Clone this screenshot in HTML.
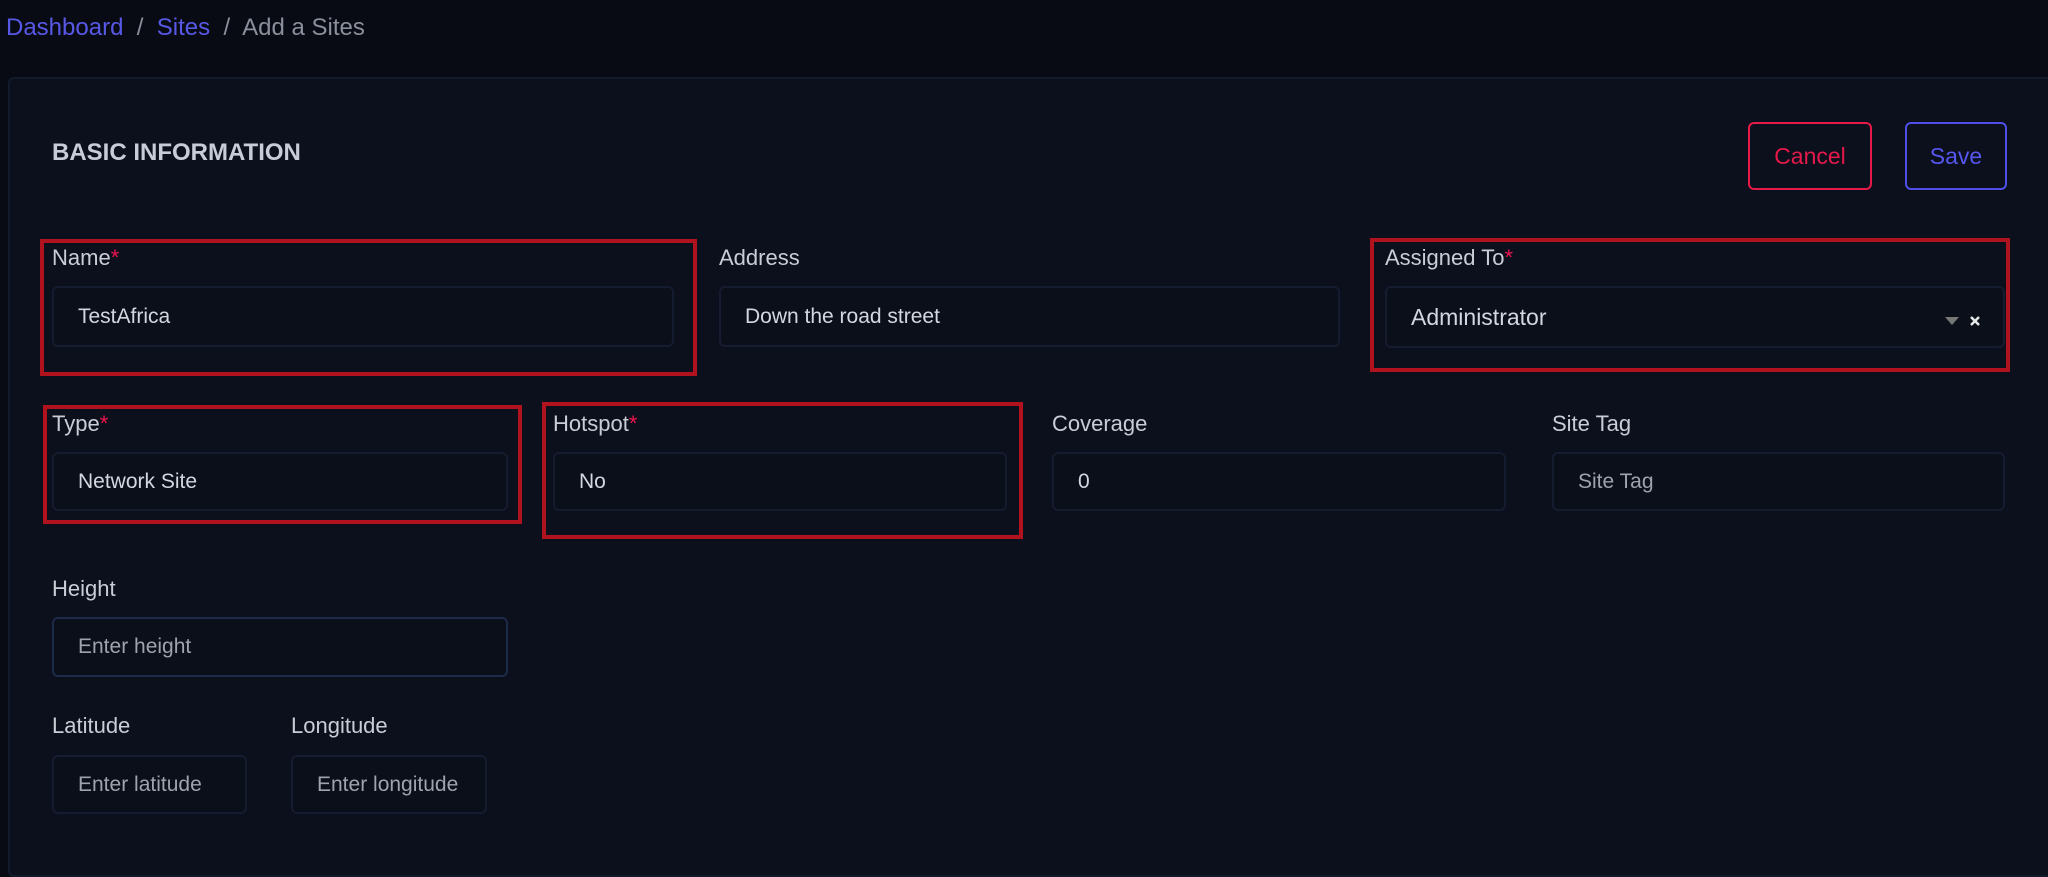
<!DOCTYPE html>
<html><head><meta charset="utf-8"><style>
*{box-sizing:border-box;margin:0;padding:0}
html,body{width:2048px;height:845px}
body{background:#080b14;font-family:"Liberation Sans",Arial,sans-serif;position:relative;overflow:hidden}
.a{position:absolute}
.card{left:8px;top:77px;width:2050px;height:800px;background:#0b101c;border:2px solid #131a2b;border-radius:6px}
.lbl{position:absolute;font-size:22px;color:#c9cdd6;line-height:26px}
.lbl b{color:#f0134f;font-weight:normal}
.in{position:absolute;background:#0a0f1a;border:2px solid #161c30;border-radius:6px;font-size:21px;color:#d3d7df;padding-left:24px;display:flex;align-items:center;white-space:nowrap;overflow:hidden}
.ph{color:#9ea3ae}
.red{position:absolute;border:4px solid #b0121e}
.btn{position:absolute;border:2px solid;border-radius:6px;font-size:23px;display:flex;align-items:center;justify-content:center;background:transparent}
</style></head><body>
<div class="a" style="left:6px;top:15px;font-size:24px;line-height:26px;color:#8a8f9c;white-space:pre"><span style="color:#5858e6">Dashboard</span>  /  <span style="color:#5858e6">Sites</span>  /  Add a Sites</div>
<div class="a card"></div>
<div class="a" style="left:52px;top:140px;font-size:24px;font-weight:bold;color:#c8ccd8;line-height:26px">BASIC INFORMATION</div>
<div class="btn" style="left:1748px;top:122px;width:124px;height:68px;border-color:#e5194a;color:#e5194a">Cancel</div>
<div class="btn" style="left:1905px;top:122px;width:102px;height:68px;border-color:#4f4fe8;color:#5656f0">Save</div>

<div class="red" style="left:40px;top:239px;width:657px;height:137px"></div>
<div class="lbl" style="left:52px;top:245px">Name<b>*</b></div>
<div class="in" style="left:52px;top:286px;width:622px;height:61px">TestAfrica</div>

<div class="lbl" style="left:719px;top:245px">Address</div>
<div class="in" style="left:719px;top:286px;width:621px;height:61px">Down the road street</div>

<div class="red" style="left:1370px;top:238px;width:640px;height:134px"></div>
<div class="lbl" style="left:1385px;top:245px">Assigned To<b>*</b></div>
<div class="in" style="left:1385px;top:286px;width:620px;height:62px;font-size:23px">Administrator</div>
<svg class="a" style="left:1944px;top:315px" width="40" height="12"><path d="M1 2h14l-7 8z" fill="#777"/><path d="M27 2l8 8M35 2l-8 8" stroke="#e6e6e6" stroke-width="2.5"/></svg>

<div class="red" style="left:43px;top:405px;width:479px;height:119px"></div>
<div class="lbl" style="left:52px;top:411px">Type<b>*</b></div>
<div class="in" style="left:52px;top:452px;width:456px;height:59px">Network Site</div>

<div class="red" style="left:542px;top:402px;width:481px;height:137px"></div>
<div class="lbl" style="left:553px;top:411px">Hotspot<b>*</b></div>
<div class="in" style="left:553px;top:452px;width:454px;height:59px">No</div>

<div class="lbl" style="left:1052px;top:411px">Coverage</div>
<div class="in" style="left:1052px;top:452px;width:454px;height:59px">0</div>
<div class="lbl" style="left:1552px;top:411px">Site Tag</div>
<div class="in ph" style="left:1552px;top:452px;width:453px;height:59px">Site Tag</div>

<div class="lbl" style="left:52px;top:576px">Height</div>
<div class="in ph" style="left:52px;top:617px;width:456px;height:60px;border-color:#1e2a4a">Enter height</div>

<div class="lbl" style="left:52px;top:713px">Latitude</div>
<div class="in ph" style="left:52px;top:755px;width:195px;height:59px">Enter latitude</div>
<div class="lbl" style="left:291px;top:713px">Longitude</div>
<div class="in ph" style="left:291px;top:755px;width:196px;height:59px"><span style="overflow:hidden;display:block;width:148px">Enter longitude</span></div>
</body></html>
